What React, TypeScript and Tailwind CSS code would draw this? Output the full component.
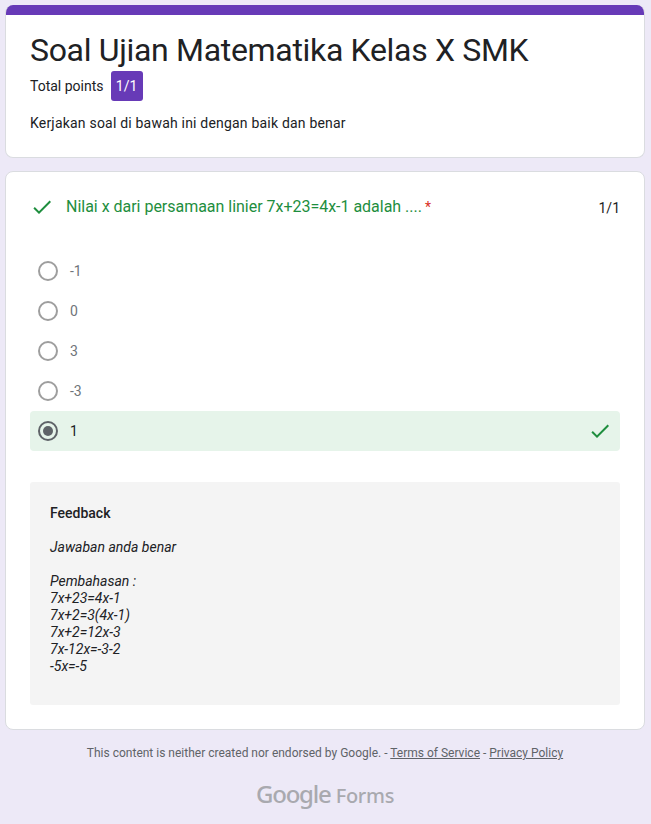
import React from "react";

const Check = ({ className }: { className: string }) => (
  <svg viewBox="0 0 24 24" className={className} fill="#1e8e3e">
    <path d="M9 16.17 4.83 12l-1.42 1.41L9 19 21 7l-1.41-1.41z" />
  </svg>
);

const Radio = ({ label, selected }: { label: string; selected?: boolean }) => (
  <div className={`flex h-10 items-center rounded pl-[8px] pr-[8px] ${selected ? "bg-[#e6f4ea]" : ""}`}>
    <div className={`flex h-5 w-5 shrink-0 items-center justify-center rounded-full border-2 ${selected ? "border-[#5f6368]" : "border-[#9e9e9e]"}`}>
      {selected && <div className="h-[10px] w-[10px] rounded-full bg-[#5f6368]" />}
    </div>
    <span className={`ml-3 text-sm ${selected ? "text-[#202124]" : "text-[#70757a]"}`}>{label}</span>
    {selected && <Check className="ml-auto h-6 w-6" />}
  </div>
);

export default function App() {
  return (
    <div className="min-h-[824px] bg-[#ede9f7] pl-[5px] pr-[6px] pt-[5px] font-['Roboto',sans-serif] text-[#202124]">
      <div className="overflow-hidden rounded-lg border border-[#dadce0] border-t-0 bg-white">
        <div className="h-[10px] bg-[#673ab7]" />
        <div className="h-[142px] px-[24px] pt-[15px]">
          <h1 className="font-['Roboto',sans-serif] text-[32px] leading-[40px] font-normal tracking-[-0.32px]">Soal Ujian Matematika Kelas X SMK</h1>
          <div className="mt-[1px] flex items-center">
            <span className="text-sm">Total points</span>
            <span className="ml-[7px] flex h-[30px] w-8 items-center justify-center rounded-[3px] bg-[#673ab7] text-sm text-white">1/1</span>
          </div>
          <p className="mt-[13px] text-sm leading-[18px] tracking-[0.2px]">Kerjakan soal di bawah ini dengan baik dan benar</p>
        </div>
      </div>

      <div className="mt-[13px] rounded-lg border border-[#dadce0] bg-white px-[24px] pb-[24px]">
        <div className="flex items-start pt-[23px]">
          <Check className="h-6 w-6 shrink-0" />
          <div className="ml-3 flex text-[16px] leading-[24px] text-[#1e8e3e]">
            <span className="tracking-[-0.02px]">Nilai x dari persamaan linier 7x+23=4x-1 adalah ....</span>
            <span className="ml-[3px] text-[14px] text-[#d93025]">*</span>
          </div>
          <div className="ml-auto pt-[1px] text-sm leading-[24px]">1/1</div>
        </div>

        <div className="mt-[31px] flex flex-col">
          <Radio label="-1" />
          <Radio label="0" />
          <Radio label="3" />
          <Radio label="-3" />
          <Radio label="1" selected />
        </div>

        <div className="mt-[31px] h-[223px] rounded-[3px] bg-[#f4f4f4] px-5 pt-[23px] text-sm leading-[17px]">
          <div className="font-medium">Feedback</div>
          <div className="mt-[17px] italic">
            <div>Jawaban anda benar</div>
            <div className="mt-[17px]">Pembahasan :</div>
            <div>7x+23=4x-1</div>
            <div>7x+2=3(4x-1)</div>
            <div>7x+2=12x-3</div>
            <div>7x-12x=-3-2</div>
            <div>-5x=-5</div>
          </div>
        </div>
      </div>

      <div className="mt-[15px] text-center text-xs leading-[16px] text-[#5f6368]">
        This content is neither created nor endorsed by Google. - <span className="underline">Terms of Service</span> - <span className="underline">Privacy Policy</span>
      </div>
      <div className="mt-[18px] flex items-baseline justify-center font-['Noto_Sans',sans-serif] text-[#a9a9af]">
        <span className="text-[24px] leading-[30px] font-medium tracking-[-1.2px]">Google</span>
        <span className="ml-[5px] text-[20px] leading-[30px] font-medium tracking-[-0.3px]">Forms</span>
      </div>
    </div>
  );
}
